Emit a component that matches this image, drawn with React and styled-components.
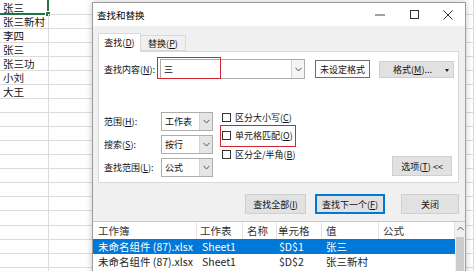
import React from 'react';
import styled, { createGlobalStyle } from 'styled-components';

const UI = `"Noto Sans CJK SC", "Microsoft YaHei", sans-serif`;

const Global = createGlobalStyle`
  html, body { margin: 0; padding: 0; background: #fff; overflow: hidden; }
  #root { width: 474px; height: 271px; }
  u { text-decoration: underline; text-underline-offset: 1px; }
`;

const Screen = styled.div`
  position: relative;
  width: 474px;
  height: 271px;
  overflow: hidden;
  font-family: ${UI};
  background: #fff;
`;

/* ---------- spreadsheet ---------- */
const Sheet = styled.div`
  display: flex;
  flex-direction: column;
`;
const SheetRow = styled.div`
  display: grid;
  grid-template-columns: 49px 1fr;
  height: 14.1px;
`;
const Cell = styled.div`
  position: relative;
  box-sizing: border-box;
  border-right: 1px solid #dcdcdc;
  border-bottom: 1px solid #dcdcdc;
  padding: 1.5px 0 0 3px;
  font-size: 10.5px;
  line-height: 12px;
  color: #111;
  white-space: nowrap;
`;
const Selection = styled.span`
  position: absolute;
  left: -3px;
  top: -3px;
  right: -1px;
  bottom: -1px;
  border: 2px solid #217346;
  &::after {
    content: '';
    position: absolute;
    right: -4px;
    bottom: -4px;
    width: 4px;
    height: 4px;
    background: #217346;
    border: 1px solid #fff;
  }
`;

/* ---------- dialog ---------- */
const Dialog = styled.div`
  position: absolute;
  left: 92px;
  top: 2px;
  width: 374px;
  height: 290px;
  box-sizing: border-box;
  background: #f0f0f0;
  border: 1px solid #9c9c9c;
  box-shadow: 0 0 7px rgba(0, 0, 0, 0.22);
  display: flex;
  flex-direction: column;
`;
const TitleBar = styled.div`
  height: 23px;
  background: #fff;
  display: flex;
  align-items: center;
  flex-shrink: 0;
`;
const Title = styled.div`
  flex: 1;
  padding-left: 4px;
  font-size: 9.5px;
  color: #000;
`;
const WinBtn = styled.div`
  width: 34px;
  height: 23px;
  display: flex;
  align-items: center;
  justify-content: center;
`;
const Body = styled.div`
  padding: 7px 6px 0 5px;
  display: flex;
  flex-direction: column;
  flex-shrink: 0;
`;
const Tabs = styled.div`
  display: flex;
  align-items: flex-end;
  height: 18px;
  position: relative;
  z-index: 1;
`;
const Tab = styled.div`
  box-sizing: border-box;
  width: ${p => p.w}px;
  height: ${p => (p.active ? 19 : 16)}px;
  margin-bottom: ${p => (p.active ? -1 : 0)}px;
  background: ${p => (p.active ? '#fff' : '#f0f0f0')};
  border: 1px solid #d9d9d9;
  border-bottom: ${p => (p.active ? 'none' : '1px solid #d9d9d9')};
  border-left: ${p => (p.active ? '1px solid #d9d9d9' : 'none')};
  font-size: 9px;
  color: #111;
  display: flex;
  align-items: center;
  justify-content: center;
  padding-bottom: ${p => (p.active ? 1 : 0)}px;
`;
const Panel = styled.div`
  box-sizing: border-box;
  height: 132px;
  background: #fff;
  border: 1px solid #d9d9d9;
  padding: 7px 6px 0 5px;
  display: flex;
  flex-direction: column;
`;
const FindRow = styled.div`
  display: flex;
  align-items: center;
  height: 20px;
`;
const Label = styled.div`
  width: ${p => p.w}px;
  flex-shrink: 0;
  font-size: 9px;
  color: #111;
  white-space: nowrap;
`;
const Combo = styled.div`
  position: relative;
  box-sizing: border-box;
  display: flex;
  width: ${p => p.w}px;
  height: ${p => p.h}px;
  background: #fff;
  border: 1px solid #adadad;
  flex-shrink: 0;
`;
const ComboText = styled.div`
  flex: 1;
  padding-left: 3px;
  font-size: 9px;
  color: #111;
  display: flex;
  align-items: center;
`;
const ComboArrow = styled.div`
  width: 12px;
  background: ${p => (p.gray ? '#e5e5e5' : '#f4f4f4')};
  border-left: 1px solid #d2d2d2;
  display: flex;
  align-items: center;
  justify-content: center;
`;
const RedMark = styled.span`
  position: absolute;
  left: ${p => p.l}px;
  top: ${p => p.t}px;
  width: ${p => p.w}px;
  height: ${p => p.h}px;
  box-sizing: border-box;
  border: 1.5px solid #d0262f;
  pointer-events: none;
`;
const Button = styled.div`
  box-sizing: border-box;
  position: relative;
  width: ${p => p.w}px;
  height: ${p => p.h || 20}px;
  margin-left: ${p => p.ml || 0}px;
  flex-shrink: 0;
  background: ${p => (p.plain ? '#fdfdfd' : '#e1e1e1')};
  border: 1px solid ${p => (p.focus ? '#0078d7' : p.plain ? '#6f6f6f' : '#cfcfcf')};
  box-shadow: ${p => (p.focus ? 'inset 0 0 0 1px #0078d7' : 'none')};
  font-size: 9px;
  color: #111;
  display: flex;
  align-items: center;
  justify-content: center;
  white-space: nowrap;
`;
const Caret = styled.span`
  position: absolute;
  right: 4px;
  top: 7px;
  width: 0;
  height: 0;
  border-left: 2.5px solid transparent;
  border-right: 2.5px solid transparent;
  border-top: 3px solid #222;
`;
const Options = styled.div`
  display: flex;
  margin-top: 33px;
`;
const FieldGrid = styled.div`
  display: grid;
  grid-template-columns: 57px 52px;
  grid-auto-rows: 19px;
  row-gap: 4px;
  align-items: center;
`;
const CheckCol = styled.div`
  margin-left: 8px;
  margin-top: -4px;
  display: flex;
  flex-direction: column;
`;
const CheckItem = styled.div`
  position: relative;
  height: 18.5px;
  display: flex;
  align-items: center;
  font-size: 9px;
  color: #111;
  white-space: nowrap;
`;
const Box = styled.span`
  box-sizing: border-box;
  width: 9px;
  height: 9px;
  margin-left: 1px;
  margin-right: 4px;
  border: 1px solid #333;
  background: #fff;
`;
const OptBtnWrap = styled.div`
  margin-left: auto;
  align-self: flex-end;
  margin-bottom: 1px;
`;
const ButtonRow = styled.div`
  display: flex;
  justify-content: flex-end;
  margin-top: 11px;
`;

/* ---------- results ---------- */
const Results = styled.div`
  margin-top: 7px;
  flex: 1;
  display: flex;
  background: #fff;
  border-top: 1px solid #c8c8c8;
`;
const Table = styled.div`
  flex: 1;
  display: flex;
  flex-direction: column;
`;
const TRow = styled.div`
  display: grid;
  grid-template-columns: 104px 46px 34px 45px 57px 1fr;
  height: ${p => (p.head ? 17 : 15)}px;
  background: ${p => (p.sel ? '#0078d7' : 'transparent')};
  color: ${p => (p.sel ? '#fff' : '#222')};
`;
const TCell = styled.div`
  box-sizing: border-box;
  padding-left: ${p => p.pl ?? 4}px;
  font-size: 10.5px;
  display: flex;
  align-items: center;
  white-space: nowrap;
  overflow: hidden;
  border-right: ${p => (p.head ? '1px solid #e3e3e3' : 'none')};
  color: ${p => (p.head ? '#333' : 'inherit')};
`;
const Scroll = styled.div`
  width: 10px;
  background: #f0f0f0;
  display: flex;
  flex-direction: column;
  align-items: center;
  padding-top: 4px;
`;
const Thumb = styled.div`
  margin-top: 6px;
  width: 8px;
  height: 40px;
  background: #cdcdcd;
`;

const Chevron = ({ up }) => (
  <svg width="7" height="5" viewBox="0 0 7 5">
    <path d={up ? 'M0.5 4.2 L3.5 1 L6.5 4.2' : 'M0.5 0.8 L3.5 4 L6.5 0.8'} fill="none" stroke="#555" strokeWidth="1" />
  </svg>
);

const sheetData = ['张三', '张三新村', '李四', '张三', '张三功', '小刘', '大王'];

export default function App() {
  const rows = Array.from({ length: 20 }, (_, i) => sheetData[i] || '');
  return (
    <>
      <Global />
      <Screen>
        <Sheet>
          {rows.map((t, i) => (
            <SheetRow key={i}>
              <Cell>
                {t}
                {i === 0 && <Selection />}
              </Cell>
              <Cell />
            </SheetRow>
          ))}
        </Sheet>

        <Dialog>
          <TitleBar>
            <Title>查找和替换</Title>
            <WinBtn>
              <svg width="10" height="2" viewBox="0 0 10 2"><path d="M0 1 H10" stroke="#444" strokeWidth="1" /></svg>
            </WinBtn>
            <WinBtn>
              <svg width="9" height="9" viewBox="0 0 9 9"><rect x="0.5" y="0.5" width="8" height="8" fill="none" stroke="#333" strokeWidth="1" /></svg>
            </WinBtn>
            <WinBtn>
              <svg width="10" height="10" viewBox="0 0 10 10"><path d="M0.5 0.5 L9.5 9.5 M9.5 0.5 L0.5 9.5" stroke="#333" strokeWidth="1" /></svg>
            </WinBtn>
          </TitleBar>

          <Body>
            <Tabs>
              <Tab active w={43}>查找(<u>D</u>)</Tab>
              <Tab w={45}>替换(<u>P</u>)</Tab>
            </Tabs>
            <Panel>
              <FindRow>
                <Label w={56}>查找内容(<u>N</u>):</Label>
                <Combo w={145} h={20}>
                  <ComboText>三</ComboText>
                  <ComboArrow><Chevron /></ComboArrow>
                  <RedMark l={-4} t={-3} w={64} h={22} />
                </Combo>
                <Button plain w={55} h={18} ml={10}>未设定格式</Button>
                <Button w={75} h={17} ml={9}>
                  <span style={{ marginRight: 8 }}>格式(<u>M</u>)...</span>
                  <Caret />
                </Button>
              </FindRow>

              <Options>
                <FieldGrid>
                  <Label w={57}>范围(<u>H</u>):</Label>
                  <Combo w={52} h={19}><ComboText>工作表</ComboText><ComboArrow gray><Chevron /></ComboArrow></Combo>
                  <Label w={57}>搜索(<u>S</u>):</Label>
                  <Combo w={52} h={19}><ComboText>按行</ComboText><ComboArrow gray><Chevron /></ComboArrow></Combo>
                  <Label w={57}>查找范围(<u>L</u>):</Label>
                  <Combo w={52} h={19}><ComboText>公式</ComboText><ComboArrow gray><Chevron /></ComboArrow></Combo>
                </FieldGrid>
                <CheckCol>
                  <CheckItem><Box />区分大小写(<u>C</u>)</CheckItem>
                  <CheckItem>
                    <Box />单元格匹配(<u>O</u>)
                    <RedMark l={-1} t={-1.5} w={76} h={22} />
                  </CheckItem>
                  <CheckItem><Box />区分全/半角(<u>B</u>)</CheckItem>
                </CheckCol>
                <OptBtnWrap>
                  <Button w={60} h={20}>选项(<u>T</u>) &lt;&lt;</Button>
                </OptBtnWrap>
              </Options>
            </Panel>

            <ButtonRow>
              <Button w={61}>查找全部(<u>I</u>)</Button>
              <Button focus w={70} ml={9}>查找下一个(<u>F</u>)</Button>
              <Button w={58} ml={16}>关闭</Button>
            </ButtonRow>
          </Body>

          <Results>
            <Table>
              <TRow head>
                <TCell head pl={5}>工作簿</TCell>
                <TCell head pl={3}>工作表</TCell>
                <TCell head pl={4}>名称</TCell>
                <TCell head pl={1}>单元格</TCell>
                <TCell head pl={4}>值</TCell>
                <TCell head pl={4}>公式</TCell>
              </TRow>
              <TRow sel>
                <TCell pl={5}>未命名组件 (87).xlsx</TCell>
                <TCell pl={5}>Sheet1</TCell>
                <TCell />
                <TCell pl={2}>$D$1</TCell>
                <TCell pl={4}>张三</TCell>
                <TCell />
              </TRow>
              <TRow>
                <TCell pl={5}>未命名组件 (87).xlsx</TCell>
                <TCell pl={5}>Sheet1</TCell>
                <TCell />
                <TCell pl={2}>$D$2</TCell>
                <TCell pl={4}>张三新村</TCell>
                <TCell />
              </TRow>
            </Table>
            <Scroll>
              <Chevron up />
              <Thumb />
            </Scroll>
          </Results>
        </Dialog>
      </Screen>
    </>
  );
}
